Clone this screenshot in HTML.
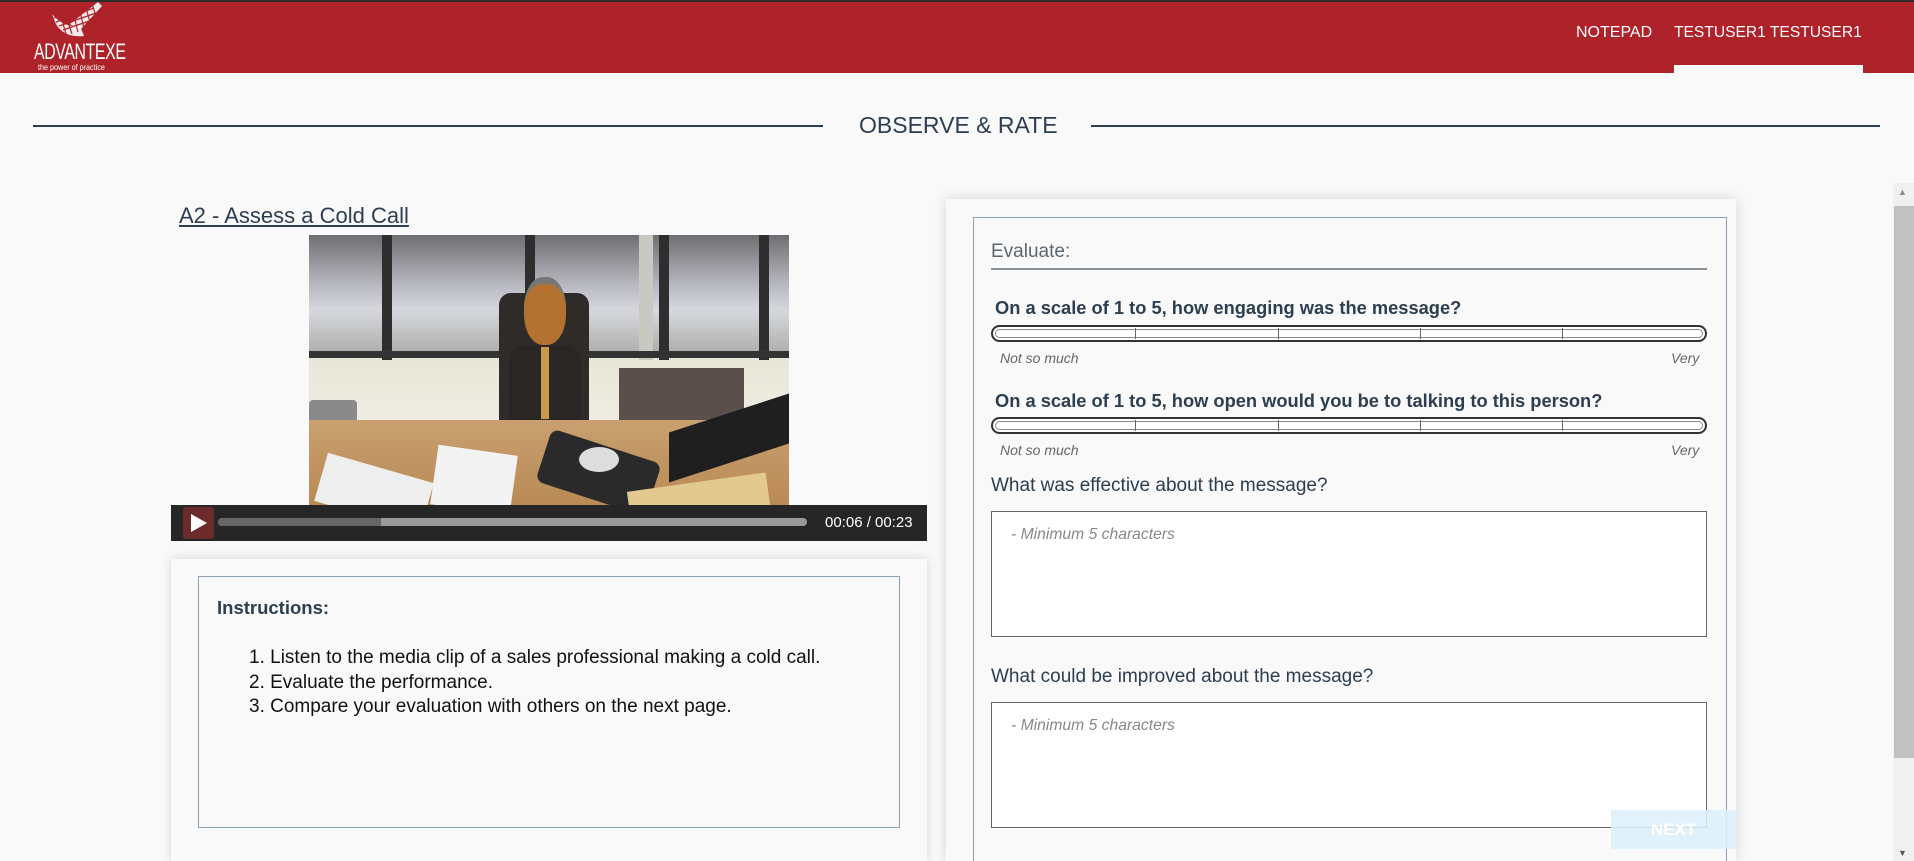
<!DOCTYPE html>
<html style="width:1914px;height:861px;overflow:hidden"><head><meta charset="utf-8"><style>
*{box-sizing:border-box;margin:0;padding:0}
body{width:1914px;height:861px;overflow:hidden;background:#f9f9f9;font-family:"Liberation Sans",sans-serif;color:#2c3e50;position:relative}
.a{position:absolute}
</style></head><body>
<div class="a" style="left:0;top:0;width:1914px;height:73px;background:#ae2229;border-top:2px solid #2d2d2d"></div>
<!-- logo -->
<svg class="a" style="left:50px;top:2px" width="56" height="36" viewBox="0 0 56 36">
<g fill="#fff">
<path d="M2 12 Q14 26 30 24 L34 34 Q14 36 6 22 Z" opacity=".9"/>
<path d="M20 22 L48 0 L52 4 L30 28 Z" opacity=".9"/>
</g>
<g stroke="#ae2229" stroke-width="1.2">
<path d="M4 16 L40 2 M6 20 L44 6 M9 24 L46 11 M13 28 L48 16"/>
<path d="M12 18 L16 32 M18 20 L22 32 M24 14 L28 30 M30 10 L34 26 M36 6 L40 20 M42 2 L46 14"/>
</g>
</svg>
<div class="a" style="left:34px;top:39px;width:120px;color:#fff;font-size:22px;letter-spacing:-0.5px;transform:scaleX(.72);transform-origin:left">ADVANTEXE</div>
<div class="a" style="left:38px;top:63px;color:#fff;font-size:8px;transform:scaleX(.9);transform-origin:left">the power of practice</div>
<div class="a" style="left:1576px;top:24px;color:#fff;font-size:16px">NOTEPAD</div>
<div class="a" style="left:1674px;top:24px;color:#fff;font-size:15.6px">TESTUSER1 TESTUSER1</div>
<div class="a" style="left:1674px;top:65px;width:189px;height:8px;background:#f9f9f9"></div>

<div class="a" style="left:33px;top:125px;width:790px;height:2px;background:#2c3e50"></div>
<div class="a" style="left:859px;top:112px;font-size:23px;color:#2c3e50">OBSERVE &amp; RATE</div>
<div class="a" style="left:1091px;top:125px;width:789px;height:2px;background:#2c3e50"></div>

<!-- scrollbar -->
<div class="a" style="left:1893px;top:183px;width:21px;height:678px;background:#f0f0f0"></div>
<div class="a" style="left:1894px;top:206px;width:20px;height:552px;background:#c1c1c1"></div>
<div class="a" style="left:1898px;top:187px;font-size:9px;color:#888">▲</div>
<div class="a" style="left:1898px;top:848px;font-size:9px;color:#555">▼</div>

<div class="a" style="left:179px;top:203px;font-size:22px;color:#2c3e50;text-decoration:underline">A2 - Assess a Cold Call</div>

<!-- video -->
<div class="a" style="left:309px;top:235px;width:480px;height:270px;overflow:hidden;background:#ece9dc">
 <div class="a" style="left:0;top:0;width:480px;height:125px;background:linear-gradient(#6e6e72,#b8b8c0 40%,#d6d8de 60%,#a9a7a4)"></div>
 <div class="a" style="left:0;top:120px;width:480px;height:70px;background:linear-gradient(#e8e6d8,#f0eee2)"></div>
 <div class="a" style="left:73px;top:0;width:10px;height:125px;background:#2e2e2e"></div>
 <div class="a" style="left:216px;top:0;width:10px;height:120px;background:#2e2e2e"></div>
 <div class="a" style="left:330px;top:0;width:14px;height:125px;background:#c9c9c2"></div>
 <div class="a" style="left:350px;top:0;width:10px;height:125px;background:#2e2e2e"></div>
 <div class="a" style="left:450px;top:0;width:10px;height:125px;background:#2e2e2e"></div>
 <div class="a" style="left:0;top:116px;width:480px;height:7px;background:#333"></div>
 <div class="a" style="left:310px;top:133px;width:125px;height:55px;background:#5a4f4a"></div>
 <div class="a" style="left:0;top:165px;width:48px;height:60px;background:#8a8a8a;border-radius:4px"></div>
 <div class="a" style="left:190px;top:58px;width:90px;height:130px;background:#2f2b29;border-radius:12px 12px 0 0"></div>
 <div class="a" style="left:200px;top:110px;width:72px;height:80px;background:#2a2624;border-radius:16px 16px 0 0"></div>
 <div class="a" style="left:232px;top:112px;width:8px;height:72px;background:#c99a4a"></div>
 <div class="a" style="left:215px;top:42px;width:42px;height:68px;background:#b3722f;border-radius:45%;border-top:7px solid #777"></div>
 <div class="a" style="left:0;top:185px;width:480px;height:85px;background:linear-gradient(#c9a070,#b98a55)"></div>
 <div class="a" style="left:360px;top:178px;width:120px;height:50px;background:#1e1f1e;transform:skewY(-18deg)"></div>
 <div class="a" style="left:232px;top:210px;width:115px;height:55px;background:#2a2a2a;border-radius:8px;transform:rotate(18deg)"></div>
 <div class="a" style="left:270px;top:212px;width:40px;height:25px;background:#ddd;border-radius:50%"></div>
 <div class="a" style="left:125px;top:215px;width:80px;height:60px;background:#f3f3f3;transform:rotate(8deg)"></div>
 <div class="a" style="left:10px;top:232px;width:110px;height:50px;background:#eee;transform:rotate(16deg)"></div>
 <div class="a" style="left:320px;top:247px;width:140px;height:40px;background:#e2c98f;transform:rotate(-8deg)"></div>
</div>
<div class="a" style="left:171px;top:505px;width:756px;height:36px;background:#262626"></div>
<div class="a" style="left:183px;top:507px;width:31px;height:32px;background:#6b2b2b;border-radius:3px"></div>
<svg class="a" style="left:188px;top:512px" width="22" height="22"><path d="M3 2 L19 11 L3 20 Z" fill="#fff"/></svg>
<div class="a" style="left:218px;top:518px;width:589px;height:8px;background:#999;border-radius:4px"></div>
<div class="a" style="left:218px;top:518px;width:163px;height:8px;background:#666;border-radius:4px 0 0 4px"></div>
<div class="a" style="left:825px;top:514px;color:#fff;font-size:15px">00:06 / 00:23</div>

<!-- instructions card -->
<div class="a" style="left:171px;top:559px;width:756px;height:302px;background:#f9f9f9;box-shadow:0 0 10px rgba(0,0,0,.15)"></div>
<div class="a" style="left:198px;top:576px;width:702px;height:252px;border:1px solid #8fa0b4"></div>
<div class="a" style="left:217px;top:597px;font-size:18.5px;font-weight:bold;color:#2c3e50">Instructions:</div>
<div class="a" style="left:249px;top:646px;font-size:19px;line-height:24.5px;color:#111;white-space:nowrap">
1. Listen to the media clip of a sales professional making a cold call.<br>
2. Evaluate the performance.<br>
3. Compare your evaluation with others on the next page.</div>

<!-- right card -->
<div class="a" style="left:946px;top:199px;width:790px;height:662px;background:#f9f9f9;box-shadow:0 0 12px rgba(0,0,0,.15)"></div>
<div class="a" style="left:973px;top:217px;width:754px;height:660px;border:1px solid #8fa0b4;border-bottom:none"></div>
<div class="a" style="left:991px;top:241px;font-size:19px;color:#5c6670;font-weight:300">Evaluate:</div>
<div class="a" style="left:991px;top:268px;width:716px;height:2px;background:#8a9199"></div>

<div class="a" style="left:995px;top:297px;font-size:18.3px;font-weight:bold;color:#2c3e50;white-space:nowrap">On a scale of 1 to 5, how engaging was the message?</div>
<div class="a" style="left:991px;top:325px;width:716px;height:17px;border:2px solid #333;border-radius:9px;background:#fff;box-shadow:inset 0 0 0 2px #fff, inset 0 0 0 3px #888"></div>
<div class="a" style="left:1135px;top:328px;width:1px;height:11px;background:#666"></div>
<div class="a" style="left:1278px;top:328px;width:1px;height:11px;background:#666"></div>
<div class="a" style="left:1420px;top:328px;width:1px;height:11px;background:#666"></div>
<div class="a" style="left:1562px;top:328px;width:1px;height:11px;background:#666"></div>
<div class="a" style="left:1000px;top:350px;font-size:14px;font-style:italic;color:#666">Not so much</div>
<div class="a" style="left:1671px;top:350px;font-size:14px;font-style:italic;color:#666">Very</div>

<div class="a" style="left:995px;top:390px;font-size:18.3px;font-weight:bold;color:#2c3e50;white-space:nowrap">On a scale of 1 to 5, how open would you be to talking to this person?</div>
<div class="a" style="left:991px;top:417px;width:716px;height:17px;border:2px solid #333;border-radius:9px;background:#fff;box-shadow:inset 0 0 0 2px #fff, inset 0 0 0 3px #888"></div>
<div class="a" style="left:1135px;top:420px;width:1px;height:11px;background:#666"></div>
<div class="a" style="left:1278px;top:420px;width:1px;height:11px;background:#666"></div>
<div class="a" style="left:1420px;top:420px;width:1px;height:11px;background:#666"></div>
<div class="a" style="left:1562px;top:420px;width:1px;height:11px;background:#666"></div>
<div class="a" style="left:1000px;top:442px;font-size:14px;font-style:italic;color:#666">Not so much</div>
<div class="a" style="left:1671px;top:442px;font-size:14px;font-style:italic;color:#666">Very</div>

<div class="a" style="left:991px;top:475px;font-size:19px;color:#2c3e50;white-space:nowrap">What was effective about the message?</div>
<div class="a" style="left:991px;top:511px;width:716px;height:126px;border:1px solid #666;background:#fff"></div>
<div class="a" style="left:1011px;top:526px;font-size:15.7px;font-style:italic;color:#888">- Minimum 5 characters</div>

<div class="a" style="left:991px;top:666px;font-size:19px;color:#2c3e50;white-space:nowrap">What could be improved about the message?</div>
<div class="a" style="left:991px;top:702px;width:716px;height:126px;border:1px solid #666;background:#fff"></div>
<div class="a" style="left:1011px;top:717px;font-size:15.7px;font-style:italic;color:#888">- Minimum 5 characters</div>

<div class="a" style="left:1611px;top:810px;width:125px;height:39px;background:rgba(220,240,252,.85);color:#fff;font-weight:bold;font-size:17px;text-align:center;line-height:39px">NEXT</div>
</body></html>
